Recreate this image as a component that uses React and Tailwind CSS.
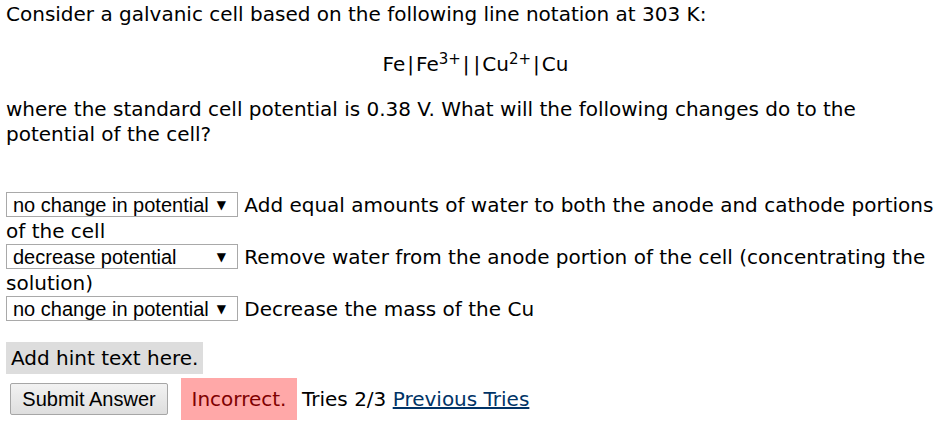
import React from 'react';

const rows = [
  {
    value: 'no change in potential',
    text: 'Add equal amounts of water to both the anode and cathode portions of the cell',
  },
  {
    value: 'decrease potential',
    text: 'Remove water from the anode portion of the cell (concentrating the solution)',
  },
  {
    value: 'no change in potential',
    text: 'Decrease the mass of the Cu',
  },
];

const Dropdown = ({ value }) => (
  <span className="inline-flex items-center justify-between w-[232px] h-[25px] border border-[#a9a9a9] bg-white pl-[6px] pr-[11px] align-top font-['Liberation_Sans',Arial,sans-serif] text-[20px] leading-none text-black">
    <span>{value}</span>
    <span className="font-['DejaVu_Sans',sans-serif] text-[12px]">▼</span>
  </span>
);

// verdana's pipe is wider than dejavu's
const Bar = () => <span className="mx-[2px]">|</span>;

export default function App() {
  return (
    <div className="w-[951px] h-[434px] bg-white px-[6px] pt-[2px] font-['DejaVu_Sans',Verdana,sans-serif] text-[20px] leading-[25px] text-black overflow-hidden">
      <p>Consider a galvanic cell based on the following line notation at 303 K:</p>
      <p className="mt-[25px] text-center">
        Fe<Bar />Fe<sup className="text-[15px] top-[-7px]">3+</sup><Bar /><Bar />Cu<sup className="text-[15px] top-[-7px]">2+</sup><Bar />Cu
      </p>
      <p className="mt-[20px]">
        where the standard cell potential is 0.38 V. What will the following changes do to the potential of the cell?
      </p>

      {/* Questions */}
      <div className="mt-[45px]">
        {rows.map((r, i) => (
          <div key={i} className="leading-[26px]">
            <Dropdown value={r.value} /> {r.text}
          </div>
        ))}
      </div>

      <div className="mt-[20px] inline-block bg-[#dddddd] px-[5px] py-[3px] leading-[26px]">Add hint text here.</div>

      <div className="flex items-center mt-[4px] leading-[26px]">
        <button className="ml-[4px] w-[158px] h-[32px] border border-[#a6a6a6] rounded-[2px] bg-gradient-to-b from-[#f2f2f2] to-[#dedede] font-['Liberation_Sans',Arial,sans-serif] text-[20px] text-black">
          Submit Answer
        </button>
        <span className="ml-[13px] w-[116px] h-[42px] flex items-center justify-center bg-[#ffa8a8] text-[#800000]">Incorrect.</span>
        <span className="ml-[5px] whitespace-pre">
          Tries 2/3 <a href="#" className="text-[#003366] underline">Previous Tries</a>
        </span>
      </div>
    </div>
  );
}
